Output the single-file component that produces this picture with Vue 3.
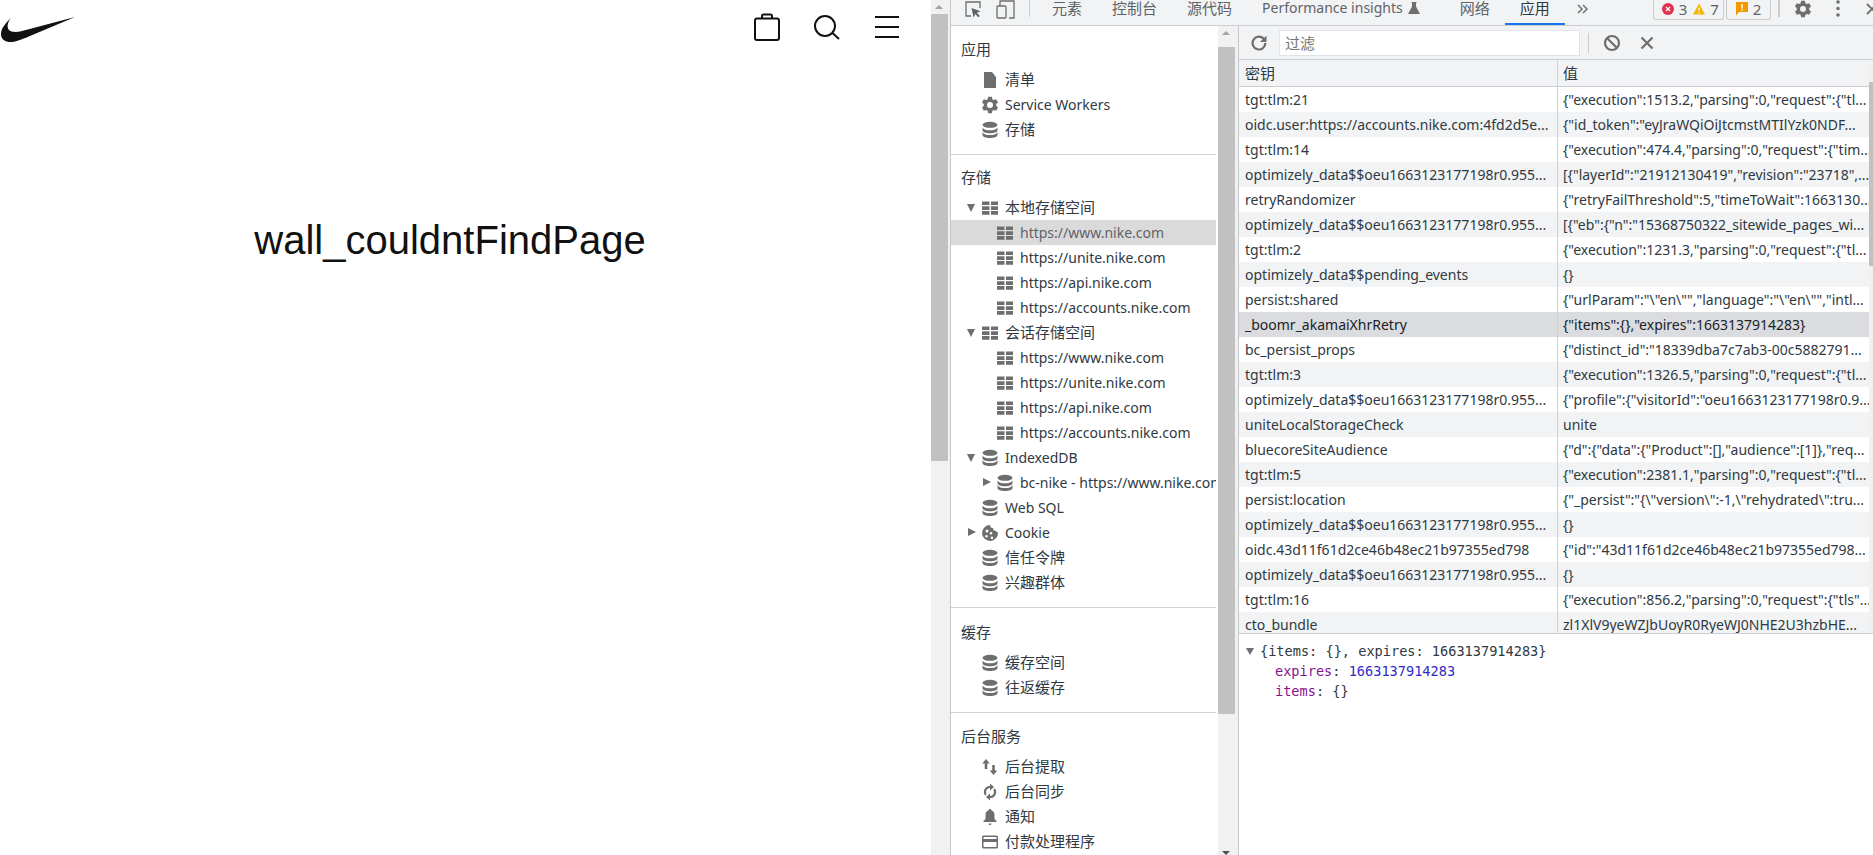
<template>
  <div class="screen">
    <!-- icon sprite for the devtools side tree -->
    <svg class="sprite" aria-hidden="true">
      <symbol id="i-doc" viewBox="0 0 18 18">
        <path d="M3 1h8l4 5v10.5q0 .5-.5.5h-11q-.5 0-.5-.5z" fill="#6e6e6e" />
      </symbol>
      <symbol id="i-gear" viewBox="0 0 24 24">
        <path fill="#6e6e6e" fill-rule="evenodd" d="M9.5 1h5l.7 3.2 1.9 1.1 3.1-1 2.5 4.4-2.4 2.1v2.4l2.4 2.1-2.5 4.4-3.1-1-1.9 1.1-.7 3.2h-5l-.7-3.2-1.9-1.1-3.1 1-2.5-4.4 2.4-2.1v-2.4L1.300 8.700l2.500-4.400 3.100 1 1.900-1.100zM12 8a4 4 0 1 0 0 8 4 4 0 0 0 0-8z" />
      </symbol>
      <symbol id="i-db" viewBox="0 0 18 18">
        <ellipse cx="9" cy="3.800" rx="7.500" ry="3" fill="#6e6e6e" />
        <path d="M1.500 6.500c1 2 4 2.800 7.500 2.800s6.500-.8 7.500-2.800v2.700c0 1.700-3.400 3-7.500 3s-7.500-1.300-7.500-3z" fill="#6e6e6e" />
        <path d="M1.500 11.300c1 2 4 2.800 7.500 2.800s6.500-.8 7.500-2.800V14c0 1.700-3.400 3-7.500 3s-7.500-1.300-7.500-3z" fill="#6e6e6e" />
      </symbol>
      <symbol id="i-table" viewBox="0 0 18 18">
        <path d="M1 2.500h7.500v3.600H1zM10 2.500h7v3.600h-7zM1 7.300h7.500v3.600H1zM10 7.300h7v3.600h-7zM1 12.100h7.500v3.600H1zM10 12.100h7v3.600h-7z" fill="#6e6e6e" />
      </symbol>
      <symbol id="i-cookie" viewBox="0 0 18 18">
        <path fill="#6e6e6e" fill-rule="evenodd" d="M9 1a3 3 0 0 0 3 3 3 3 0 0 0 3 3 3 3 0 0 0 2 1.500A8 8 0 1 1 9 1zM6 5.500a1.500 1.500 0 1 0 0 3 1.500 1.500 0 0 0 0-3zM10 8a1.300 1.300 0 1 0 0 2.600A1.300 1.300 0 0 0 10 8zM5.500 11a1.300 1.300 0 1 0 0 2.600 1.300 1.300 0 0 0 0-2.600zM11 12.500a1.300 1.300 0 1 0 0 2.600 1.300 1.300 0 0 0 0-2.600z" />
      </symbol>
      <symbol id="i-fetch" viewBox="0 0 18 18">
        <path d="M5 1l3.800 4.500H6.300V11H3.700V5.500H1.200zM12.500 17l-3.800-4.500h2.500V7h2.600v5.500h2.500z" fill="#6e6e6e" />
      </symbol>
      <symbol id="i-sync" viewBox="0 0 18 18">
        <path d="M9 3V.5l4 3.500-4 3.500V5a4 4 0 0 0-3.400 6.100L4.200 12.800A6 6 0 0 1 9 3zM9 15v2.500L5 14l4-3.500V13a4 4 0 0 0 3.400-6.100l1.400-1.700A6 6 0 0 1 9 15z" fill="#6e6e6e" />
      </symbol>
      <symbol id="i-bell" viewBox="0 0 18 18">
        <path d="M9 1c.8 0 1.300.5 1.300 1.200 2.200.6 3.200 2.300 3.200 4.800v4l2 2v1H2.500v-1l2-2V7c0-2.500 1-4.200 3.200-4.800C7.700 1.500 8.200 1 9 1zM7.500 15.500h3a1.500 1.500 0 0 1-3 0z" fill="#6e6e6e" />
      </symbol>
      <symbol id="i-card" viewBox="0 0 18 18">
        <path fill="#6e6e6e" fill-rule="evenodd" d="M2.500 2.500h13A1.500 1.500 0 0 1 17 4v10a1.500 1.500 0 0 1-1.500 1.500h-13A1.500 1.500 0 0 1 1 14V4a1.500 1.500 0 0 1 1.500-1.500zM2.500 4v2h13V4zm0 5v5h13V9z" />
      </symbol>
    </svg>

    <main class="page">
      <header class="page-head">
        <svg class="swoosh" width="76" height="30" viewBox="0 15 76 30">
          <path d="M10.800 18C6 23 1 28 1 34c0 6 5 8.500 11 8 5-.5 12-3.500 18-6l45-19-53 14c-6 1.500-13 1.500-14.200-3-.8-3 .700-7 3-10z" fill="#111" />
        </svg>
        <div class="page-icons">
          <svg width="28" height="28" viewBox="0 0 28 28" fill="none" stroke="#111" stroke-width="2">
            <rect x="2" y="5.500" width="24" height="21.500" rx="2" />
            <path d="M9 5.500V3q0-1.500 1.500-1.500h7Q19 1.500 19 3v2.500" />
          </svg>
          <svg width="28" height="28" viewBox="0 0 28 28" fill="none" stroke="#111" stroke-width="2">
            <circle cx="12" cy="13" r="10" />
            <path d="M19.500 20l6.500 6" />
          </svg>
          <svg width="28" height="28" viewBox="0 0 28 28" fill="none" stroke="#111" stroke-width="2">
            <path d="M2 4h24M2 14h24M2 24h24" />
          </svg>
        </div>
      </header>
      <h1 class="wall">wall_couldntFindPage</h1>
    </main>

    <div class="page-scroll">
      <span class="arrow-up"></span>
      <div class="page-thumb"></div>
    </div>

    <section class="devtools">
      <nav class="tabbar">
        <svg class="tool-icon first" width="18" height="18" viewBox="0 0 18 18" fill="none" stroke="#6e6e6e" stroke-width="1.300">
          <path d="M7 15H2V1h14v6" />
          <path d="M7.500 7l9 3.300-3.700 1.400 3 3.300-1.500 1.300-2.900-3.300-1.800 3.400z" fill="#5f6368" stroke="none" />
        </svg>
        <svg class="tool-icon" width="20" height="20" viewBox="0 0 20 20" fill="none" stroke="#6e6e6e" stroke-width="1.300">
          <rect x="1" y="6" width="9" height="12" rx="1" />
          <path d="M4 6V1h14v17h-5" />
        </svg>
        <span class="tool-sep"></span>
        <a
          v-for="tab in tabs"
          :key="tab"
          class="tab"
          :class="{ active: tab === '应用', latin: tab.startsWith('Perf') }"
        >
          {{ tab }}
          <svg v-if="tab.startsWith('Perf')" class="flask" width="12" height="14" viewBox="0 0 12 14">
            <path d="M3.500 1h5v1H8v3.500l4 7.500H0l4-7.500V2h-.5z" fill="#6e6e6e" />
          </svg>
        </a>
        <svg class="more" width="11" height="10" viewBox="0 0 11 10" fill="none" stroke="#6e6e6e" stroke-width="1.500">
          <path d="M1 1l4 4-4 4M6 1l4 4-4 4" />
        </svg>
        <div class="badge first-badge">
          <svg width="12" height="12" viewBox="0 0 12 12">
            <circle cx="6" cy="6" r="6" fill="#e0334c" />
            <path d="M4 4l4 4M8 4l-4 4" stroke="#fff" stroke-width="1.200" />
          </svg>
          <span>3</span>
          <svg width="12" height="12" viewBox="0 0 12 12">
            <path d="M6 .5L12 11.500H0z" fill="#f2b400" />
            <path d="M6 4.500v3.500M6 9v1.200" stroke="#fff" stroke-width="1.200" />
          </svg>
          <span>7</span>
        </div>
        <div class="badge second-badge">
          <svg width="12" height="14" viewBox="0 0 12 14">
            <path d="M0 0h12v10H3l-3 3.500z" fill="#f29900" />
            <path d="M6 2v4.500M6 7.500v1.300" stroke="#fff" stroke-width="1.400" />
          </svg>
          <span>2</span>
        </div>
        <span class="tool-sep thick"></span>
        <svg class="gear" width="18" height="18"><use href="#i-gear" /></svg>
        <svg class="dots" width="4" height="17" viewBox="0 0 4 17">
          <circle cx="2" cy="2" r="1.800" fill="#6e6e6e" />
          <circle cx="2" cy="8.500" r="1.800" fill="#6e6e6e" />
          <circle cx="2" cy="15" r="1.800" fill="#6e6e6e" />
        </svg>
        <svg class="close" width="8" height="12" viewBox="0 0 8 12">
          <path d="M1 1l10 10M11 1L1 11" stroke="#6e6e6e" stroke-width="1.800" fill="none" />
        </svg>
      </nav>

      <div class="panes">
        <aside class="side">
          <div v-for="group in groups" :key="group.title" class="side-group">
            <h3 class="side-title">{{ group.title }}</h3>
            <div
              v-for="(item, i) in group.items"
              :key="i"
              class="side-row"
              :class="{ sub: item.sub, picked: item.picked }"
            >
              <span class="caret" :class="item.caret"></span>
              <svg class="side-icon" width="18" height="18"><use :href="'#i-' + item.icon" /></svg>
              <span class="side-text" :class="{ cjk: isCjk(item.label) }">{{ item.label }}</span>
            </div>
          </div>
        </aside>
        <div class="side-scroll">
          <span class="arrow-up"></span>
          <div class="side-thumb"></div>
          <span class="arrow-down"></span>
        </div>

        <div class="store">
          <div class="filterbar">
            <svg class="reload" width="18" height="18" viewBox="0 0 18 18">
              <path d="M14.300 3.700A7.500 7.500 0 1 0 16.500 9h-2.200a5.300 5.300 0 1 1-1.600-3.700L10 8h6.500V1.500z" fill="#6e6e6e" />
            </svg>
            <div class="filter-input">过滤</div>
            <span class="filter-sep"></span>
            <svg class="block" width="18" height="18" viewBox="0 0 18 18" fill="none" stroke="#6e6e6e" stroke-width="2.200">
              <circle cx="9" cy="9" r="7" />
              <path d="M4 4l10 10" />
            </svg>
            <svg class="clear" width="14" height="14" viewBox="0 0 14 14">
              <path d="M1.500 1.500l11 11M12.500 1.500l-11 11" stroke="#6e6e6e" stroke-width="2.200" />
            </svg>
          </div>

          <div class="table">
            <div class="tr head">
              <div class="td cjk">密钥</div>
              <div class="td cjk">值</div>
            </div>
            <div
              v-for="(row, i) in rows"
              :key="i"
              class="tr"
              :class="{ odd: i % 2 === 1, chosen: row[0] === '_boomr_akamaiXhrRetry' }"
            >
              <div class="td">{{ row[0] }}</div>
              <div class="td">{{ row[1] }}</div>
            </div>
            <div class="table-scroll"><div class="table-thumb"></div></div>
          </div>

          <div class="detail">
            <div class="line"><span class="tri"></span>{items: {}, expires: 1663137914283}</div>
            <div class="line nested"><span class="k">expires</span>: <span class="n">1663137914283</span></div>
            <div class="line nested"><span class="k">items</span>: {}</div>
          </div>
        </div>
      </div>
    </section>
  </div>
</template>

<script setup>
const tabs = ['元素', '控制台', '源代码', 'Performance insights', '网络', '应用']

const tbl = (label, extra = {}) => ({ label, icon: 'table', sub: true, ...extra })
const db = (label, extra = {}) => ({ label, icon: 'db', ...extra })

const groups = [
  {
    title: '应用',
    items: [
      { label: '清单', icon: 'doc' },
      { label: 'Service Workers', icon: 'gear' },
      db('存储')
    ]
  },
  {
    title: '存储',
    items: [
      { label: '本地存储空间', icon: 'table', caret: 'down' },
      tbl('https://www.nike.com', { picked: true }),
      tbl('https://unite.nike.com'),
      tbl('https://api.nike.com'),
      tbl('https://accounts.nike.com'),
      { label: '会话存储空间', icon: 'table', caret: 'down' },
      tbl('https://www.nike.com'),
      tbl('https://unite.nike.com'),
      tbl('https://api.nike.com'),
      tbl('https://accounts.nike.com'),
      db('IndexedDB', { caret: 'down' }),
      db('bc-nike - https://www.nike.com', { sub: true, caret: 'right' }),
      db('Web SQL'),
      { label: 'Cookie', icon: 'cookie', caret: 'right' },
      db('信任令牌'),
      db('兴趣群体')
    ]
  },
  {
    title: '缓存',
    items: [db('缓存空间'), db('往返缓存')]
  },
  {
    title: '后台服务',
    items: [
      { label: '后台提取', icon: 'fetch' },
      { label: '后台同步', icon: 'sync' },
      { label: '通知', icon: 'bell' },
      { label: '付款处理程序', icon: 'card' }
    ]
  }
]

const optKey = 'optimizely_data$$oeu1663123177198r0.955...'

const rows = [
  ['tgt:tlm:21', '{"execution":1513.2,"parsing":0,"request":{"tl...'],
  ['oidc.user:https://accounts.nike.com:4fd2d5e...', '{"id_token":"eyJraWQiOiJtcmstMTIlYzk0NDF...'],
  ['tgt:tlm:14', '{"execution":474.4,"parsing":0,"request":{"tim...'],
  [optKey, '[{"layerId":"21912130419","revision":"23718",...'],
  ['retryRandomizer', '{"retryFailThreshold":5,"timeToWait":1663130...'],
  [optKey, '[{"eb":{"n":"15368750322_sitewide_pages_wi...'],
  ['tgt:tlm:2', '{"execution":1231.3,"parsing":0,"request":{"tl...'],
  ['optimizely_data$$pending_events', '{}'],
  ['persist:shared', '{"urlParam":"\\"en\\"","language":"\\"en\\"","intl...'],
  ['_boomr_akamaiXhrRetry', '{"items":{},"expires":1663137914283}'],
  ['bc_persist_props', '{"distinct_id":"18339dba7c7ab3-00c5882791...'],
  ['tgt:tlm:3', '{"execution":1326.5,"parsing":0,"request":{"tl...'],
  [optKey, '{"profile":{"visitorId":"oeu1663123177198r0.9...'],
  ['uniteLocalStorageCheck', 'unite'],
  ['bluecoreSiteAudience', '{"d":{"data":{"Product":[],"audience":[1]},"req...'],
  ['tgt:tlm:5', '{"execution":2381.1,"parsing":0,"request":{"tl...'],
  ['persist:location', '{"_persist":"{\\"version\\":-1,\\"rehydrated\\":tru...'],
  [optKey, '{}'],
  ['oidc.43d11f61d2ce46b48ec21b97355ed798', '{"id":"43d11f61d2ce46b48ec21b97355ed798...'],
  [optKey, '{}'],
  ['tgt:tlm:16', '{"execution":856.2,"parsing":0,"request":{"tls"...'],
  ['cto_bundle', 'zl1XlV9yeWZJbUoyR0RyeWJ0NHE2U3hzbHE...']
]

function isCjk(text) {
  return /[\u4e00-\u9fff]/.test(text)
}
</script>

<style>
html, body {
  margin: 0;
  height: 100%;
  overflow: hidden;
  background: #fff;
}
</style>

<style scoped>
.screen {
  display: flex;
  width: 1873px;
  height: 855px;
  overflow: hidden;
  font-family: "Noto Sans", "Noto Sans CJK SC", sans-serif;
  font-size: 14px;
  color: #303942;
}
.sprite {
  position: absolute;
  width: 0;
  height: 0;
}
.cjk {
  font-family: "Noto Sans CJK SC", sans-serif;
  font-size: 15px;
}

/* left: the page itself */
.page {
  width: 931px;
  flex: none;
  background: #fff;
}
.page-head {
  display: flex;
  justify-content: space-between;
  padding: 13px 30px 0 0;
}
.swoosh {
  margin-top: 2px;
}
.page-icons {
  display: flex;
  gap: 32px;
}
.wall {
  margin: 0;
  width: 900px;
  padding-top: 173px;
  text-align: center;
  font-family: "Liberation Sans", sans-serif;
  font-size: 40px;
  line-height: 44px;
  font-weight: 400;
  color: #111;
}
.page-scroll {
  width: 19px;
  flex: none;
  background: #f1f1f1;
  display: flex;
  flex-direction: column;
}
.page-thumb {
  width: 17px;
  height: 447px;
  margin-top: 5px;
  background: #c1c1c1;
}
.arrow-up,
.arrow-down {
  display: block;
  width: 0;
  height: 0;
  margin: 5px 0 0 4px;
  border-left: 4.5px solid transparent;
  border-right: 4.5px solid transparent;
}
.arrow-up {
  border-bottom: 4px solid #a3a3a3;
}
.arrow-down {
  margin-top: 137px;
  border-top: 4px solid #505050;
}

/* devtools */
.devtools {
  flex: 1;
  min-width: 0;
  border-left: 1px solid #c4c7cb;
  display: flex;
  flex-direction: column;
}
.tabbar {
  height: 25px;
  flex: none;
  display: flex;
  align-items: center;
  overflow: hidden;
  background: #f1f3f4;
  border-bottom: 1px solid #cbcdd1;
  color: #5f6368;
}
.tool-icon {
  flex: none;
  margin-top: -6px;
  margin-left: 14px;
}
.tool-icon.first {
  margin-left: 13px;
}
.tool-sep {
  flex: none;
  width: 1px;
  height: 17px;
  margin: -8px 7px 0 13px;
  background: #ccc;
}
.tab {
  flex: none;
  position: relative;
  height: 25px;
  line-height: 16px;
  padding: 0 15px;
  display: flex;
  gap: 5px;
  white-space: nowrap;
  font-size: 15px;
  box-sizing: border-box;
}
.tab.latin {
  font-size: 14px;
}
.tab.active {
  color: #303942;
  border-bottom: 2px solid #1a73e8;
}
.flask {
  flex: none;
  margin: 1px 10px 0 0;
}
.more {
  flex: none;
  margin: -8px 65px 0 12px;
}
.badge {
  height: 20px;
  margin-top: -6px;
  margin-left: 2px;
  display: flex;
  align-items: center;
  gap: 5px;
  border: 1px solid #ccc;
  border-top: none;
  border-radius: 0 0 3px 3px;
  font-size: 15px;
  box-sizing: border-box;
  flex: none;
}
.first-badge {
  width: 71px;
  margin-left: 0;
  padding-left: 8px;
}
.first-badge span + svg {
  margin-left: 1px;
}
.second-badge {
  width: 45px;
  padding-left: 9px;
}
.tool-sep.thick {
  width: 2px;
  flex: none;
  margin: -8px 14px 0 7px;
}
.gear {
  flex: none;
  margin-top: -7px;
}
.dots {
  flex: none;
  margin: -8px 0 0 24px;
}
.close {
  margin: -8px 0 0 26px;
  flex: none;
}
.panes {
  flex: 1;
  min-height: 0;
  display: flex;
}

/* side tree */
.side {
  width: 265px;
  flex: none;
  overflow: hidden;
  padding-top: 1px;
  background: #fff;
}
.side-group {
  padding-bottom: 12px;
  border-bottom: 1px solid #d0d3d7;
}
.side-group:nth-child(3) {
  padding-top: 2px;
}
.side-group:nth-child(4) {
  padding-top: 1px;
  border-bottom: none;
}
.side-title {
  margin: 0;
  height: 24px;
  padding: 10px 0 6px 10px;
  line-height: 24px;
  font-family: "Noto Sans CJK SC", sans-serif;
  font-size: 15px;
  font-weight: 400;
  color: #303942;
}
.side-row {
  height: 25px;
  display: flex;
  align-items: center;
  padding-left: 14px;
  white-space: nowrap;
  overflow: hidden;
}
.side-row.sub {
  padding-left: 29px;
}
.side-row.picked {
  background: #dadada;
  color: #5f6368;
}
.side-text.cjk {
  margin-top: -2px;
}
.caret {
  width: 16px;
  flex: none;
  height: 10px;
  position: relative;
}
.caret.down::before {
  content: "";
  position: absolute;
  left: 2px;
  top: 1px;
  border-left: 4.5px solid transparent;
  border-right: 4.5px solid transparent;
  border-top: 8px solid #6e6e6e;
}
.caret.right::before {
  content: "";
  position: absolute;
  left: 3px;
  top: 0;
  border-top: 4.5px solid transparent;
  border-bottom: 4.5px solid transparent;
  border-left: 8px solid #6e6e6e;
}
.side-icon {
  flex: none;
  margin-right: 6px;
}
.side-scroll {
  width: 22px;
  flex: none;
  padding-left: 2px;
  box-sizing: border-box;
  background: linear-gradient(to right, #fff 2px, #f1f1f1 2px);
  display: flex;
  flex-direction: column;
}
.side-thumb {
  width: 17px;
  height: 667px;
  margin-top: 12px;
  background: #c1c1c1;
}

/* storage table */
.store {
  flex: 1;
  min-width: 0;
  border-left: 1px solid #c4c7cb;
  display: flex;
  flex-direction: column;
}
.filterbar {
  height: 33px;
  flex: none;
  display: flex;
  align-items: center;
  background: #f1f3f4;
  border-bottom: 1px solid #cbcdd1;
}
.reload {
  margin-left: 11px;
}
.filter-input {
  width: 301px;
  height: 26px;
  margin-left: 11px;
  padding-left: 5px;
  box-sizing: border-box;
  line-height: 24px;
  background: #fff;
  border: 1px solid #e2e3e5;
  font-family: "Noto Sans CJK SC", sans-serif;
  font-size: 15px;
  color: #757575;
}
.filter-sep {
  width: 1px;
  height: 20px;
  margin: 0 14px 0 8px;
  background: #ccc;
}
.clear {
  margin-left: 19px;
}
.table {
  position: relative;
  height: 574px;
  flex: none;
  overflow: hidden;
  border-bottom: 1px solid #cbcdd1;
  box-sizing: border-box;
}
.tr {
  display: grid;
  grid-template-columns: 318px 1fr;
  height: 25px;
  margin-right: 4px;
  line-height: 25px;
  background: #fff;
}
.tr.odd {
  background: #f1f3f4;
}
.tr.chosen {
  background: #dadce0;
  color: #202124;
}
.tr.head {
  height: 27px;
  margin-right: 0;
  background: #f1f3f4;
  border-bottom: 1px solid #cbcdd1;
  box-sizing: border-box;
  line-height: 26px;
}
.td {
  padding-left: 6px;
  overflow: hidden;
  white-space: nowrap;
}
.td + .td {
  padding-left: 5px;
  border-left: 1px solid #cfd1d5;
}
.table-scroll {
  position: absolute;
  top: 0;
  right: 0;
  bottom: 0;
  width: 4px;
  background: #f1f1f1;
}
.table-thumb {
  height: 184px;
  margin-top: 22px;
  background: #c1c1c1;
}
.detail {
  flex: 1;
  padding: 7px 0 0 21px;
  position: relative;
  background: #fff;
  font-family: "DejaVu Sans Mono", monospace;
  font-size: 13.6px;
  line-height: 20px;
  color: #303942;
}
.tri {
  position: absolute;
  left: 7px;
  top: 14px;
  border-left: 4px solid transparent;
  border-right: 4px solid transparent;
  border-top: 7px solid #6e6e6e;
}
.line.nested {
  padding-left: 15px;
}
.k {
  color: #881391;
}
.n {
  color: #2f2ac6;
}
</style>
